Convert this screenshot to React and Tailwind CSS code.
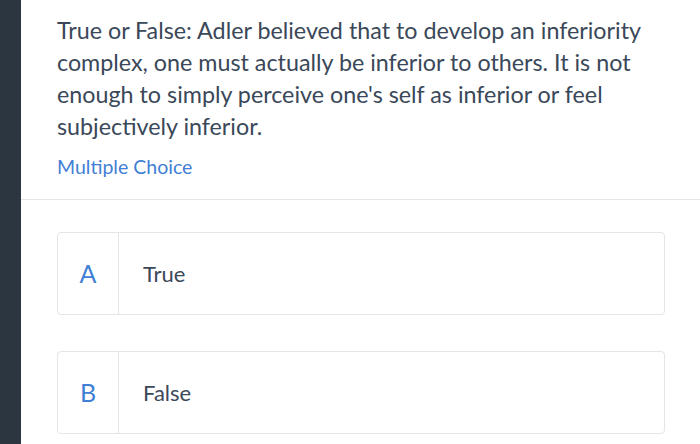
import React from 'react';

const options = [
    { letter: 'A', label: 'True' },
    { letter: 'B', label: 'False' },
];

export default function App() {
    return (
        <div className="flex h-[444px] w-[700px] overflow-hidden bg-white" style={{ fontFamily: 'Lato, "Open Sans", sans-serif' }}>
            <div className="w-[21px] shrink-0 bg-[#2b3640]" />
            <div className="flex-1">
                <div className="border-b border-[#e3e5e8] pl-[36px] pr-[40px] pt-[14px] pb-[19px]">
                    <p className="text-[23.3px] leading-[32px] text-[#3a4859]">
                        True or False: Adler believed that to develop an inferiority complex, one must actually be inferior to others. It is not enough to simply perceive one's self as inferior or feel subjectively inferior.
                    </p>
                    <p className="mt-[12px] text-[19.5px] leading-[26px] text-[#3f7fd6]">Multiple Choice</p>
                </div>
                <div className="flex flex-col gap-[36px] pl-[36px] pr-[35px] pt-[32px]">
                    {options.map((opt) => (
                        <div key={opt.letter} className="flex h-[83px] rounded-[4px] border border-[#e3e5e8]">
                            <div className="flex w-[61px] items-center justify-center border-r border-[#e3e5e8] text-[25px] text-[#3f7fd6]">
                                {opt.letter}
                            </div>
                            <div className="flex items-center pl-[24px] text-[22px] text-[#3a4859]">{opt.label}</div>
                        </div>
                    ))}
                </div>
            </div>
        </div>
    );
}
